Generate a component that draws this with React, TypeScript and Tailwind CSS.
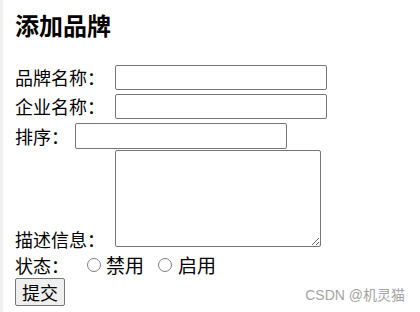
export default function App() {
  const font = { fontFamily: '"Noto Sans CJK SC", "Noto Sans", sans-serif' };

  return (
    <div
      className="relative w-[420px] h-[312px] bg-white border-l-[3px] border-[#f0f0f0] pl-[12px] text-black overflow-hidden"
      style={font}
    >
      <h3 className="mt-[11px] h-[28px] text-[24px] leading-[28px] font-bold">添加品牌</h3>

      <form className="flex flex-col text-[18px]">
        <div className="mt-[26px] flex items-center h-[25px]">
          <span className="w-[100px] leading-[25px]">品牌名称：</span>
          <input type="text" className="w-[212px] h-[25px] border border-[#767676] rounded-[2px] bg-white" />
        </div>

        <div className="mt-[4px] flex items-center h-[25px]">
          <span className="w-[100px] leading-[25px]">企业名称：</span>
          <input type="text" className="w-[212px] h-[25px] border border-[#767676] rounded-[2px] bg-white" />
        </div>

        <div className="mt-[4px] flex items-center h-[26px]">
          <span className="w-[60px] leading-[26px]">排序：</span>
          <input type="text" className="w-[212px] h-[26px] border border-[#767676] rounded-[2px] bg-white" />
        </div>

        <div className="mt-[1px] flex items-end">
          <span className="w-[100px] h-[18px] leading-[18px] -mb-[1px]">描述信息：</span>
          <textarea className="w-[206px] h-[97px] border border-[#767676] rounded-[2px] bg-white resize" />
        </div>

        <div className="flex items-end h-[31px] pb-[3px]">
          <span className="w-[72px] leading-[20px]">状态：</span>
          <input
            type="radio"
            name="status"
            className="appearance-none w-[14px] h-[14px] rounded-full border border-[#808080] bg-white mb-[3px]"
          />
          <span className="ml-[5px] text-[19px] leading-[20px]">禁用</span>
          <input
            type="radio"
            name="status"
            className="appearance-none ml-[14px] w-[14px] h-[14px] rounded-full border border-[#808080] bg-white mb-[3px]"
          />
          <span className="ml-[6px] text-[19px] leading-[20px]">启用</span>
        </div>

        <div className="flex">
          <button
            type="button"
            className="h-[28px] px-[6px] text-[18px] leading-[26px] bg-[#efefef] border border-[#767676] rounded-[2px]"
          >
            提交
          </button>
        </div>
      </form>

      <div
        className="absolute right-[15px] bottom-[9px] text-[14px] leading-[16px] text-[#a3a3a3]"
        style={{ fontFamily: '"Liberation Sans", "Noto Sans CJK SC", sans-serif' }}
      >
        CSDN @机灵猫
      </div>
    </div>
  );
}
